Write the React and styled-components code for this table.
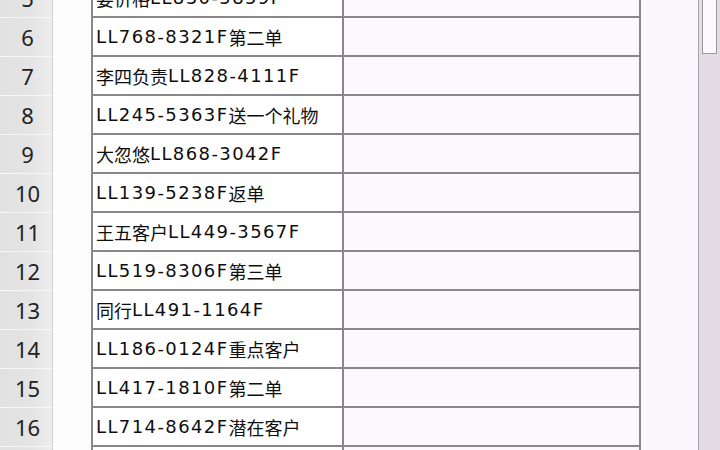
import React from "react";
import styled, { createGlobalStyle } from "styled-components";

const Global = createGlobalStyle`
  html, body { margin: 0; padding: 0; background: #ffffff; }
  body { width: 720px; height: 450px; overflow: hidden; }
  * { box-sizing: border-box; }
`;

const Page = styled.div`
  display: flex;
  width: 720px;
  height: 450px;
  overflow: hidden;
  background: #fdf8fd;
`;

const Sheet = styled.div`
  flex: 1;
  overflow: hidden;
`;

const Rows = styled.div`
  display: flex;
  flex-direction: column;
  margin-top: -21px;
`;

const Row = styled.div`
  display: grid;
  grid-template-columns: 53px 38px 251px 299px 57px;
  height: 39px;
`;

const Header = styled.div`
  display: flex;
  align-items: center;
  justify-content: center;
  padding-left: 3px;
  background: linear-gradient(to right, #e1e1e1 0%, #e4e4e4 60%, #ededed 100%);
  border-bottom: 1px solid #f7f7f7;
  border-right: 1px solid #cfcfcf;
  font-family: "Noto Sans", "Liberation Sans", sans-serif;
  font-size: 22px;
  color: #222222;
`;

const Blank = styled.div`
  background: #fefdfe;
`;

const Cell = styled.div`
  display: flex;
  align-items: center;
  padding-left: 3px;
  border-left: 2px solid #8a878b;
  border-bottom: 2px solid #8a878b;
  border-right: ${(p) => (p.$last ? "2px solid #8a878b" : "none")};
  background: ${(p) => (p.$tint ? "#fdf8fd" : "#ffffff")};
  font-family: "Noto Sans CJK SC", "Noto Sans", sans-serif;
  font-size: 18px;
  color: #0e0e0e;
  white-space: nowrap;
  overflow: hidden;
`;

const Code = styled.span`
  font-family: "DejaVu Sans", "Noto Sans", sans-serif;
  font-size: 18px;
  letter-spacing: 1.4px;
`;

const Margin = styled.div`
  background: #fcf7fc;
`;

const Scrollbar = styled.div`
  width: 22px;
  height: 450px;
  background: #e3dbe5;
  border-left: 1px solid #a8a2aa;
  padding-left: 3px;
  padding-right: 3px;
`;

const Thumb = styled.div`
  width: 15px;
  height: 54px;
  background: #fcf9fc;
  border: 1px solid #9c969e;
  border-top: none;
`;

const data = [
  [5, "要价格", "LL830-5859F", ""],
  [6, "", "LL768-8321F", "第二单"],
  [7, "李四负责", "LL828-4111F", ""],
  [8, "", "LL245-5363F", "送一个礼物"],
  [9, "大忽悠", "LL868-3042F", ""],
  [10, "", "LL139-5238F", "返单"],
  [11, "王五客户", "LL449-3567F", ""],
  [12, "", "LL519-8306F", "第三单"],
  [13, "同行", "LL491-1164F", ""],
  [14, "", "LL186-0124F", "重点客户"],
  [15, "", "LL417-1810F", "第二单"],
  [16, "", "LL714-8642F", "潜在客户"],
  [17, "", "", ""],
];

export default function App() {
  return (
    <>
      <Global />
      <Page>
        <Sheet>
          <Rows>
            {data.map(([n, pre, code, post]) => (
              <Row key={n}>
                <Header>{n}</Header>
                <Blank />
                <Cell>
                  {pre}
                  {code && <Code>{code}</Code>}
                  {post}
                </Cell>
                <Cell $tint $last />
                <Margin />
              </Row>
            ))}
          </Rows>
        </Sheet>
        <Scrollbar>
          <Thumb />
        </Scrollbar>
      </Page>
    </>
  );
}
